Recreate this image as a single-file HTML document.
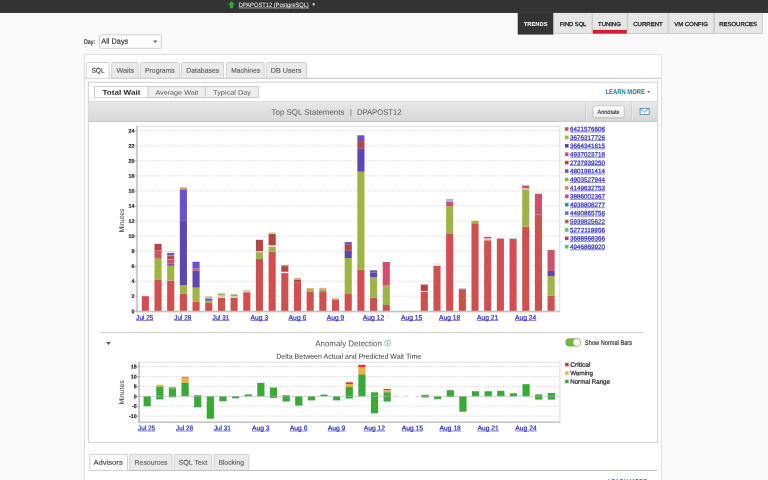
<!DOCTYPE html>
<html><head><meta charset="utf-8"><title>DPA Trends</title>
<style>
*{margin:0;padding:0}
html,body{width:768px;height:480px;overflow:hidden;background:#f9f9f9}
svg{position:absolute;left:0;top:0;display:block;will-change:transform}
svg text{font-family:"Liberation Sans",sans-serif;text-rendering:geometricPrecision}
</style></head><body>
<svg width="768" height="480" viewBox="0 0 768 480">
<rect x="0.00" y="0.00" width="768.00" height="12.90" fill="#333" rx="0" />
<line x1="0.00" y1="13.20" x2="768.00" y2="13.20" stroke="#fdfdfd" stroke-width="0.6" />
<rect x="517.70" y="12.90" width="35.90" height="21.70" fill="#333" rx="0" />
<text x="535.65" y="26.08" font-size="5.8" fill="#fff" text-anchor="middle" font-weight="bold" transform="rotate(0.03 535.7 26.1)" >TRENDS</text>
<rect x="553.75" y="12.40" width="38.15" height="21.10" fill="#e6e6e6" stroke="#c6c6c6" stroke-width="0.8" rx="0" />
<text x="559.80" y="26.08" font-size="5.8" fill="#1c1c1c" textLength="26.50" lengthAdjust="spacingAndGlyphs" stroke="#1c1c1c" stroke-width="0.28" transform="rotate(0.03 559.8 26.1)" >FIND SQL</text>
<rect x="592.50" y="12.40" width="34.70" height="21.10" fill="#e6e6e6" stroke="#c6c6c6" stroke-width="0.8" rx="0" />
<text x="598.00" y="26.08" font-size="5.8" fill="#1c1c1c" textLength="22.80" lengthAdjust="spacingAndGlyphs" stroke="#1c1c1c" stroke-width="0.28" transform="rotate(0.03 598.0 26.1)" >TUNING</text>
<rect x="627.80" y="12.40" width="40.20" height="21.10" fill="#e6e6e6" stroke="#c6c6c6" stroke-width="0.8" rx="0" />
<text x="633.20" y="26.08" font-size="5.8" fill="#1c1c1c" textLength="29.60" lengthAdjust="spacingAndGlyphs" stroke="#1c1c1c" stroke-width="0.28" transform="rotate(0.03 633.2 26.1)" >CURRENT</text>
<rect x="668.80" y="12.40" width="44.60" height="21.10" fill="#e6e6e6" stroke="#c6c6c6" stroke-width="0.8" rx="0" />
<text x="674.20" y="26.08" font-size="5.8" fill="#1c1c1c" textLength="33.80" lengthAdjust="spacingAndGlyphs" stroke="#1c1c1c" stroke-width="0.28" transform="rotate(0.03 674.2 26.1)" >VM CONFIG</text>
<rect x="714.50" y="12.40" width="48.10" height="21.10" fill="#e6e6e6" stroke="#c6c6c6" stroke-width="0.8" rx="0" />
<text x="719.20" y="26.08" font-size="5.8" fill="#1c1c1c" textLength="37.80" lengthAdjust="spacingAndGlyphs" stroke="#1c1c1c" stroke-width="0.28" transform="rotate(0.03 719.2 26.1)" >RESOURCES</text>
<rect x="592.90" y="29.90" width="33.90" height="3.70" fill="#d0202c" rx="0" />
<rect x="0.00" y="0.00" width="768.00" height="12.90" fill="#333" rx="0" />
<path d="M231.5 0.9 L235 4.7 L233.1 4.7 L233.1 8.3 L229.9 8.3 L229.9 4.7 L228 4.7 Z" fill="#1fb41f"/>
<text x="238.75" y="6.86" font-size="6.3" fill="#fff" textLength="70.00" lengthAdjust="spacingAndGlyphs" transform="rotate(0.03 238.8 6.9)" >DPAPOST12 (PostgreSQL)</text>
<line x1="238.75" y1="7.96" x2="308.75" y2="7.96" stroke="#fff" stroke-width="0.55"/>
<path d="M312.2 3.5 L315.2 3.5 L313.7 5.9 Z" fill="#fff"/>
<text x="84.00" y="43.50" font-size="6.7" fill="#222" textLength="11.00" lengthAdjust="spacingAndGlyphs" stroke="#222" stroke-width="0.12" transform="rotate(0.03 84.0 43.5)" >Day:</text>
<rect x="99.50" y="34.80" width="61.80" height="13.50" fill="#fff" stroke="#c8c8c8" stroke-width="0.9" rx="1.2" />
<text x="101.30" y="43.86" font-size="7.7" fill="#1c1c1c" textLength="27.00" lengthAdjust="spacingAndGlyphs" stroke="#1c1c1c" stroke-width="0.1" transform="rotate(0.03 101.3 43.9)" >All Days</text>
<path d="M153.1 40.6 L157.3 40.6 L155.2 43.1 Z" fill="#666"/>
<rect x="84.60" y="54.50" width="577.00" height="445.50" fill="#fff" stroke="#d8d8d8" stroke-width="0.8" rx="0" />
<line x1="85.00" y1="78.25" x2="661.20" y2="78.25" stroke="#bebebe" stroke-width="1.0" />
<rect x="86.25" y="62.50" width="22.95" height="17.50" fill="#fff" stroke="#cdcdcd" stroke-width="0.9" rx="1.2" />
<rect x="85.75" y="77.70" width="23.95" height="3.30" fill="#fff" rx="0" />
<line x1="85.75" y1="78.25" x2="109.70" y2="78.25" stroke="#d2d2d2" stroke-width="1.0" />
<text x="91.50" y="72.81" font-size="7" fill="#333" textLength="13.10" lengthAdjust="spacingAndGlyphs" stroke="#333" stroke-width="0.1" transform="rotate(0.03 91.5 72.8)" >SQL</text>
<rect x="111.70" y="62.50" width="26.60" height="17.50" fill="#eaeaea" stroke="#cdcdcd" stroke-width="0.9" rx="1.2" />
<rect x="111.20" y="77.70" width="27.60" height="3.30" fill="#fff" rx="0" />
<line x1="111.20" y1="78.25" x2="138.80" y2="78.25" stroke="#bebebe" stroke-width="1.0" />
<text x="116.50" y="72.81" font-size="7" fill="#555" textLength="17.70" lengthAdjust="spacingAndGlyphs" stroke="#555" stroke-width="0.1" transform="rotate(0.03 116.5 72.8)" >Waits</text>
<rect x="140.40" y="62.50" width="39.20" height="17.50" fill="#eaeaea" stroke="#cdcdcd" stroke-width="0.9" rx="1.2" />
<rect x="139.90" y="77.70" width="40.20" height="3.30" fill="#fff" rx="0" />
<line x1="139.90" y1="78.25" x2="180.10" y2="78.25" stroke="#bebebe" stroke-width="1.0" />
<text x="145.00" y="72.81" font-size="7" fill="#555" textLength="29.80" lengthAdjust="spacingAndGlyphs" stroke="#555" stroke-width="0.1" transform="rotate(0.03 145.0 72.8)" >Programs</text>
<rect x="181.50" y="62.50" width="42.10" height="17.50" fill="#eaeaea" stroke="#cdcdcd" stroke-width="0.9" rx="1.2" />
<rect x="181.00" y="77.70" width="43.10" height="3.30" fill="#fff" rx="0" />
<line x1="181.00" y1="78.25" x2="224.10" y2="78.25" stroke="#bebebe" stroke-width="1.0" />
<text x="186.25" y="72.81" font-size="7" fill="#555" textLength="32.95" lengthAdjust="spacingAndGlyphs" stroke="#555" stroke-width="0.1" transform="rotate(0.03 186.2 72.8)" >Databases</text>
<rect x="226.50" y="62.50" width="37.70" height="17.50" fill="#eaeaea" stroke="#cdcdcd" stroke-width="0.9" rx="1.2" />
<rect x="226.00" y="77.70" width="38.70" height="3.30" fill="#fff" rx="0" />
<line x1="226.00" y1="78.25" x2="264.70" y2="78.25" stroke="#bebebe" stroke-width="1.0" />
<text x="231.25" y="72.81" font-size="7" fill="#555" textLength="28.75" lengthAdjust="spacingAndGlyphs" stroke="#555" stroke-width="0.1" transform="rotate(0.03 231.2 72.8)" >Machines</text>
<rect x="266.25" y="62.50" width="40.45" height="17.50" fill="#eaeaea" stroke="#cdcdcd" stroke-width="0.9" rx="1.2" />
<rect x="265.75" y="77.70" width="41.45" height="3.30" fill="#fff" rx="0" />
<line x1="265.75" y1="78.25" x2="307.20" y2="78.25" stroke="#bebebe" stroke-width="1.0" />
<text x="270.80" y="72.81" font-size="7" fill="#555" textLength="30.70" lengthAdjust="spacingAndGlyphs" stroke="#555" stroke-width="0.1" transform="rotate(0.03 270.8 72.8)" >DB Users</text>
<rect x="88.30" y="82.20" width="569.40" height="360.20" fill="#fff" stroke="#cacaca" stroke-width="0.9" rx="0" />
<rect x="94.60" y="86.50" width="163.70" height="11.10" fill="#efefef" stroke="#c0c0c0" stroke-width="0.8" rx="0" />
<rect x="95.00" y="86.90" width="52.70" height="10.30" fill="#fff" rx="0" />
<line x1="148.00" y1="86.50" x2="148.00" y2="97.60" stroke="#c0c0c0" stroke-width="0.8" />
<line x1="205.40" y1="86.50" x2="205.40" y2="97.60" stroke="#c0c0c0" stroke-width="0.8" />
<text x="102.50" y="94.83" font-size="6.8" fill="#222" textLength="37.90" lengthAdjust="spacingAndGlyphs" font-weight="bold" transform="rotate(0.03 102.5 94.8)" >Total Wait</text>
<text x="155.40" y="94.76" font-size="6.6" fill="#555" textLength="42.90" lengthAdjust="spacingAndGlyphs" transform="rotate(0.03 155.4 94.8)" >Average Wait</text>
<text x="213.10" y="94.76" font-size="6.6" fill="#555" textLength="37.90" lengthAdjust="spacingAndGlyphs" transform="rotate(0.03 213.1 94.8)" >Typical Day</text>
<text x="605.40" y="94.21" font-size="7.0" fill="#1a7a9c" textLength="39.60" lengthAdjust="spacingAndGlyphs" font-weight="bold" transform="rotate(0.03 605.4 94.2)" >LEARN MORE</text>
<path d="M647.3 90.9 L650.1 90.9 L648.7 93 Z" fill="#1a7a9c"/>
<defs><linearGradient id="tb" x1="0" y1="0" x2="0" y2="1"><stop offset="0" stop-color="#e8e8e8"/><stop offset="1" stop-color="#d8d8d8"/></linearGradient></defs>
<rect x="88.80" y="101.30" width="568.40" height="20.20" fill="url(#tb)" rx="0" />
<line x1="88.80" y1="121.40" x2="657.20" y2="121.40" stroke="#c2c2c2" stroke-width="0.9" />
<line x1="88.80" y1="101.40" x2="657.20" y2="101.40" stroke="#d4d4d4" stroke-width="0.7" />
<line x1="585.80" y1="101.60" x2="585.80" y2="121.00" stroke="#c4c4c4" stroke-width="0.8" />
<line x1="631.70" y1="101.60" x2="631.70" y2="121.00" stroke="#c4c4c4" stroke-width="0.8" />
<line x1="586.50" y1="101.60" x2="586.50" y2="121.00" stroke="#f2f2f2" stroke-width="0.6" />
<line x1="632.40" y1="101.60" x2="632.40" y2="121.00" stroke="#f2f2f2" stroke-width="0.6" />
<text x="271.50" y="114.79" font-size="7.8" fill="#555" textLength="72.90" lengthAdjust="spacingAndGlyphs" transform="rotate(0.03 271.5 114.8)" >Top SQL Statements</text>
<text x="349.90" y="114.45" font-size="7.4" fill="#666" transform="rotate(0.03 349.9 114.4)" >|</text>
<text x="356.90" y="114.79" font-size="7.8" fill="#555" textLength="44.60" lengthAdjust="spacingAndGlyphs" transform="rotate(0.03 356.9 114.8)" >DPAPOST12</text>
<linearGradient id="bg" x1="0" y1="0" x2="0" y2="1"><stop offset="0" stop-color="#fdfdfd"/><stop offset="1" stop-color="#ececec"/></linearGradient>
<rect x="593.30" y="106.60" width="30.50" height="12.00" fill="#bdbdbd" rx="1.8" opacity="0.55"/>
<rect x="592.90" y="105.80" width="31.30" height="11.90" fill="url(#bg)" stroke="#b9b9b9" stroke-width="0.7" rx="1.6" />
<text x="597.50" y="113.92" font-size="6.2" fill="#333" textLength="22.10" lengthAdjust="spacingAndGlyphs" stroke="#333" stroke-width="0.12" transform="rotate(0.03 597.5 113.9)" >Annotate</text>
<rect x="640.10" y="108.40" width="9.10" height="6.00" fill="#f2f8fa" stroke="#3a8eaa" stroke-width="0.8" rx="0" />
<path d="M640.3 108.7 L644.65 112 L649 108.7" fill="none" stroke="#3a8eaa" stroke-width="0.7"/>
<rect x="136.30" y="126.20" width="423.50" height="185.60" fill="#fff" stroke="#dadada" stroke-width="0.9" rx="0" />
<line x1="137.60" y1="296.21" x2="559.30" y2="296.21" stroke="#cecece" stroke-width="0.8" stroke-dasharray="1.5 1.5"/>
<line x1="137.60" y1="281.17" x2="559.30" y2="281.17" stroke="#cecece" stroke-width="0.8" stroke-dasharray="1.5 1.5"/>
<line x1="137.60" y1="266.13" x2="559.30" y2="266.13" stroke="#cecece" stroke-width="0.8" stroke-dasharray="1.5 1.5"/>
<line x1="137.60" y1="251.09" x2="559.30" y2="251.09" stroke="#cecece" stroke-width="0.8" stroke-dasharray="1.5 1.5"/>
<line x1="137.60" y1="236.05" x2="559.30" y2="236.05" stroke="#cecece" stroke-width="0.8" stroke-dasharray="1.5 1.5"/>
<line x1="137.60" y1="221.01" x2="559.30" y2="221.01" stroke="#cecece" stroke-width="0.8" stroke-dasharray="1.5 1.5"/>
<line x1="137.60" y1="205.97" x2="559.30" y2="205.97" stroke="#cecece" stroke-width="0.8" stroke-dasharray="1.5 1.5"/>
<line x1="137.60" y1="190.93" x2="559.30" y2="190.93" stroke="#cecece" stroke-width="0.8" stroke-dasharray="1.5 1.5"/>
<line x1="137.60" y1="175.89" x2="559.30" y2="175.89" stroke="#cecece" stroke-width="0.8" stroke-dasharray="1.5 1.5"/>
<line x1="137.60" y1="160.85" x2="559.30" y2="160.85" stroke="#cecece" stroke-width="0.8" stroke-dasharray="1.5 1.5"/>
<line x1="137.60" y1="145.81" x2="559.30" y2="145.81" stroke="#cecece" stroke-width="0.8" stroke-dasharray="1.5 1.5"/>
<line x1="137.60" y1="130.77" x2="559.30" y2="130.77" stroke="#cecece" stroke-width="0.8" stroke-dasharray="1.5 1.5"/>
<rect x="141.80" y="296.21" width="7.10" height="15.04" fill="#d05050" rx="0" />
<rect x="154.48" y="279.89" width="7.10" height="31.36" fill="#d05050" rx="0" />
<rect x="154.48" y="258.01" width="7.10" height="21.88" fill="#9eb445" rx="0" />
<rect x="154.48" y="250.34" width="7.10" height="7.67" fill="#d0506c" rx="0" />
<rect x="154.48" y="243.80" width="7.10" height="6.54" fill="#b54545" rx="0" />
<rect x="167.16" y="280.57" width="7.10" height="30.68" fill="#d05050" rx="0" />
<rect x="167.16" y="265.75" width="7.10" height="14.81" fill="#9eb445" rx="0" />
<rect x="167.16" y="263.80" width="7.10" height="1.96" fill="#6a58b8" rx="0" />
<rect x="167.16" y="259.89" width="7.10" height="3.91" fill="#d0506c" rx="0" />
<rect x="167.16" y="258.99" width="7.10" height="0.90" fill="#d88088" rx="0" />
<rect x="167.16" y="256.05" width="7.10" height="2.93" fill="#b54545" rx="0" />
<rect x="167.16" y="255.53" width="7.10" height="0.53" fill="#e8c8c8" rx="0" />
<rect x="167.16" y="252.97" width="7.10" height="2.56" fill="#6852c8" rx="0" />
<rect x="167.16" y="251.84" width="7.10" height="1.13" fill="#fafafa" rx="0" />
<rect x="167.16" y="251.09" width="7.10" height="0.75" fill="#c8d8a0" rx="0" />
<rect x="179.84" y="293.50" width="7.10" height="17.75" fill="#d05050" rx="0" />
<rect x="179.84" y="285.16" width="7.10" height="8.35" fill="#9eb445" rx="0" />
<rect x="179.84" y="220.26" width="7.10" height="64.90" fill="#5c46b2" rx="0" />
<rect x="179.84" y="189.43" width="7.10" height="30.83" fill="#6852c8" rx="0" />
<rect x="179.84" y="187.55" width="7.10" height="1.88" fill="#d89050" rx="0" />
<rect x="192.52" y="301.85" width="7.10" height="9.40" fill="#d05050" rx="0" />
<rect x="192.52" y="287.64" width="7.10" height="14.21" fill="#9eb445" rx="0" />
<rect x="192.52" y="270.64" width="7.10" height="17.00" fill="#5c46b2" rx="0" />
<rect x="192.52" y="268.39" width="7.10" height="2.26" fill="#d0506c" rx="0" />
<rect x="192.52" y="261.99" width="7.10" height="6.39" fill="#6852c8" rx="0" />
<rect x="192.52" y="261.24" width="7.10" height="0.75" fill="#e8c8c8" rx="0" />
<rect x="205.20" y="302.98" width="7.10" height="8.27" fill="#d05050" rx="0" />
<rect x="205.20" y="300.72" width="7.10" height="2.26" fill="#9eb445" rx="0" />
<rect x="205.20" y="298.47" width="7.10" height="2.26" fill="#6852c8" rx="0" />
<rect x="205.20" y="297.49" width="7.10" height="0.98" fill="#a0b8e0" rx="0" />
<rect x="205.20" y="296.59" width="7.10" height="0.90" fill="#9eb445" rx="0" />
<rect x="217.88" y="297.71" width="7.10" height="13.54" fill="#d05050" rx="0" />
<rect x="217.88" y="295.46" width="7.10" height="2.26" fill="#e8c8c8" rx="0" />
<rect x="217.88" y="293.50" width="7.10" height="1.96" fill="#9eb445" rx="0" />
<rect x="230.56" y="297.86" width="7.10" height="13.39" fill="#d05050" rx="0" />
<rect x="230.56" y="296.21" width="7.10" height="1.65" fill="#e8c8c8" rx="0" />
<rect x="230.56" y="294.33" width="7.10" height="1.88" fill="#9eb445" rx="0" />
<rect x="243.24" y="292.22" width="7.10" height="19.03" fill="#d05050" rx="0" />
<rect x="243.24" y="290.95" width="7.10" height="1.28" fill="#e8c8c8" rx="0" />
<rect x="243.24" y="289.97" width="7.10" height="0.98" fill="#c8d8a0" rx="0" />
<rect x="255.92" y="258.84" width="7.10" height="52.41" fill="#d05050" rx="0" />
<rect x="255.92" y="252.14" width="7.10" height="6.69" fill="#9eb445" rx="0" />
<rect x="255.92" y="251.09" width="7.10" height="1.05" fill="#e8c8c8" rx="0" />
<rect x="255.92" y="239.81" width="7.10" height="11.28" fill="#b54545" rx="0" />
<rect x="268.60" y="251.69" width="7.10" height="59.56" fill="#d05050" rx="0" />
<rect x="268.60" y="246.50" width="7.10" height="5.19" fill="#9eb445" rx="0" />
<rect x="268.60" y="245.07" width="7.10" height="1.43" fill="#e8c8c8" rx="0" />
<rect x="268.60" y="233.79" width="7.10" height="11.28" fill="#b54545" rx="0" />
<rect x="268.60" y="232.29" width="7.10" height="1.50" fill="#c8d8a0" rx="0" />
<rect x="281.28" y="273.05" width="7.10" height="38.20" fill="#d05050" rx="0" />
<rect x="281.28" y="271.77" width="7.10" height="1.28" fill="#f4eeee" rx="0" />
<rect x="281.28" y="266.13" width="7.10" height="5.64" fill="#b54545" rx="0" />
<rect x="281.28" y="264.85" width="7.10" height="1.28" fill="#9eb445" rx="0" />
<rect x="293.96" y="282.45" width="7.10" height="28.80" fill="#d05050" rx="0" />
<rect x="293.96" y="279.67" width="7.10" height="2.78" fill="#b54545" rx="0" />
<rect x="293.96" y="278.24" width="7.10" height="1.43" fill="#9eb445" rx="0" />
<rect x="306.64" y="291.85" width="7.10" height="19.40" fill="#d05050" rx="0" />
<rect x="306.64" y="289.74" width="7.10" height="2.11" fill="#9eb445" rx="0" />
<rect x="306.64" y="288.24" width="7.10" height="1.50" fill="#d89050" rx="0" />
<rect x="319.32" y="291.17" width="7.10" height="20.08" fill="#d05050" rx="0" />
<rect x="319.32" y="289.74" width="7.10" height="1.43" fill="#9eb445" rx="0" />
<rect x="319.32" y="288.24" width="7.10" height="1.50" fill="#d89050" rx="0" />
<rect x="332.00" y="299.59" width="7.10" height="11.66" fill="#d05050" rx="0" />
<rect x="332.00" y="298.47" width="7.10" height="1.13" fill="#d89050" rx="0" />
<rect x="344.68" y="293.95" width="7.10" height="17.30" fill="#d05050" rx="0" />
<rect x="344.68" y="258.01" width="7.10" height="35.95" fill="#9eb445" rx="0" />
<rect x="344.68" y="250.71" width="7.10" height="7.29" fill="#5c46b2" rx="0" />
<rect x="344.68" y="244.17" width="7.10" height="6.54" fill="#b54545" rx="0" />
<rect x="344.68" y="242.07" width="7.10" height="2.11" fill="#6852c8" rx="0" />
<rect x="357.36" y="269.51" width="7.10" height="41.74" fill="#d05050" rx="0" />
<rect x="357.36" y="171.75" width="7.10" height="97.76" fill="#9eb445" rx="0" />
<rect x="357.36" y="148.29" width="7.10" height="23.46" fill="#5c46b2" rx="0" />
<rect x="357.36" y="141.07" width="7.10" height="7.22" fill="#b54545" rx="0" />
<rect x="357.36" y="135.28" width="7.10" height="5.79" fill="#6852c8" rx="0" />
<rect x="370.04" y="297.71" width="7.10" height="13.54" fill="#d05050" rx="0" />
<rect x="370.04" y="277.18" width="7.10" height="20.53" fill="#9eb445" rx="0" />
<rect x="370.04" y="272.37" width="7.10" height="4.81" fill="#5c46b2" rx="0" />
<rect x="370.04" y="270.27" width="7.10" height="2.11" fill="#6852c8" rx="0" />
<rect x="382.72" y="305.01" width="7.10" height="6.24" fill="#d05050" rx="0" />
<rect x="382.72" y="285.53" width="7.10" height="19.48" fill="#9eb445" rx="0" />
<rect x="382.72" y="261.99" width="7.10" height="23.54" fill="#d0506c" rx="0" />
<rect x="420.76" y="291.85" width="7.10" height="19.40" fill="#d05050" rx="0" />
<rect x="420.76" y="290.95" width="7.10" height="0.90" fill="#f4eeee" rx="0" />
<rect x="420.76" y="284.55" width="7.10" height="6.39" fill="#b54545" rx="0" />
<rect x="433.44" y="265.75" width="7.10" height="45.50" fill="#d05050" rx="0" />
<rect x="433.44" y="263.12" width="7.10" height="2.63" fill="#efe2e6" rx="0" />
<rect x="446.12" y="233.34" width="7.10" height="77.91" fill="#d05050" rx="0" />
<rect x="446.12" y="206.20" width="7.10" height="27.15" fill="#9eb445" rx="0" />
<rect x="446.12" y="201.61" width="7.10" height="4.59" fill="#d0506c" rx="0" />
<rect x="446.12" y="198.90" width="7.10" height="2.71" fill="#a0b8e0" rx="0" />
<rect x="458.80" y="289.14" width="7.10" height="22.11" fill="#d05050" rx="0" />
<rect x="458.80" y="288.31" width="7.10" height="0.83" fill="#a0b8e0" rx="0" />
<rect x="471.48" y="223.27" width="7.10" height="87.98" fill="#d05050" rx="0" />
<rect x="471.48" y="220.78" width="7.10" height="2.48" fill="#9eb445" rx="0" />
<rect x="484.16" y="240.26" width="7.10" height="70.99" fill="#d05050" rx="0" />
<rect x="484.16" y="238.16" width="7.10" height="2.11" fill="#c8d8a0" rx="0" />
<rect x="484.16" y="236.88" width="7.10" height="1.28" fill="#c040a0" rx="0" />
<rect x="496.84" y="238.53" width="7.10" height="72.72" fill="#d05050" rx="0" />
<rect x="509.52" y="238.98" width="7.10" height="72.27" fill="#d05050" rx="0" />
<rect x="509.52" y="238.31" width="7.10" height="0.68" fill="#a0b8e0" rx="0" />
<rect x="522.20" y="226.65" width="7.10" height="84.60" fill="#d05050" rx="0" />
<rect x="522.20" y="189.43" width="7.10" height="37.22" fill="#9eb445" rx="0" />
<rect x="522.20" y="188.30" width="7.10" height="1.13" fill="#e8c8c8" rx="0" />
<rect x="522.20" y="185.52" width="7.10" height="2.78" fill="#d0506c" rx="0" />
<rect x="534.88" y="214.54" width="7.10" height="96.71" fill="#d05050" rx="0" />
<rect x="534.88" y="193.71" width="7.10" height="20.83" fill="#d0506c" rx="0" />
<rect x="547.56" y="295.61" width="7.10" height="15.64" fill="#d05050" rx="0" />
<rect x="547.56" y="276.13" width="7.10" height="19.48" fill="#9eb445" rx="0" />
<rect x="547.56" y="270.94" width="7.10" height="5.19" fill="#5c46b2" rx="0" />
<rect x="547.56" y="250.04" width="7.10" height="20.91" fill="#d0506c" rx="0" />
<line x1="137.00" y1="126.20" x2="137.00" y2="312.20" stroke="#c2c2c2" stroke-width="1.5" />
<line x1="136.30" y1="311.50" x2="559.80" y2="311.50" stroke="#c2c2c2" stroke-width="1.6" />
<line x1="134.60" y1="311.25" x2="136.60" y2="311.25" stroke="#888" stroke-width="0.6" />
<text x="134.40" y="313.15" font-size="5.3" fill="#2c2c2c" text-anchor="end" font-weight="bold" stroke="#2c2c2c" stroke-width="0.2" transform="rotate(0.03 134.4 313.1)" >0</text>
<line x1="134.60" y1="296.21" x2="136.60" y2="296.21" stroke="#888" stroke-width="0.6" />
<text x="134.40" y="298.11" font-size="5.3" fill="#2c2c2c" text-anchor="end" font-weight="bold" stroke="#2c2c2c" stroke-width="0.2" transform="rotate(0.03 134.4 298.1)" >2</text>
<line x1="134.60" y1="281.17" x2="136.60" y2="281.17" stroke="#888" stroke-width="0.6" />
<text x="134.40" y="283.07" font-size="5.3" fill="#2c2c2c" text-anchor="end" font-weight="bold" stroke="#2c2c2c" stroke-width="0.2" transform="rotate(0.03 134.4 283.1)" >4</text>
<line x1="134.60" y1="266.13" x2="136.60" y2="266.13" stroke="#888" stroke-width="0.6" />
<text x="134.40" y="268.03" font-size="5.3" fill="#2c2c2c" text-anchor="end" font-weight="bold" stroke="#2c2c2c" stroke-width="0.2" transform="rotate(0.03 134.4 268.0)" >6</text>
<line x1="134.60" y1="251.09" x2="136.60" y2="251.09" stroke="#888" stroke-width="0.6" />
<text x="134.40" y="252.99" font-size="5.3" fill="#2c2c2c" text-anchor="end" font-weight="bold" stroke="#2c2c2c" stroke-width="0.2" transform="rotate(0.03 134.4 253.0)" >8</text>
<line x1="134.60" y1="236.05" x2="136.60" y2="236.05" stroke="#888" stroke-width="0.6" />
<text x="134.40" y="237.95" font-size="5.3" fill="#2c2c2c" text-anchor="end" font-weight="bold" stroke="#2c2c2c" stroke-width="0.2" transform="rotate(0.03 134.4 237.9)" >10</text>
<line x1="134.60" y1="221.01" x2="136.60" y2="221.01" stroke="#888" stroke-width="0.6" />
<text x="134.40" y="222.91" font-size="5.3" fill="#2c2c2c" text-anchor="end" font-weight="bold" stroke="#2c2c2c" stroke-width="0.2" transform="rotate(0.03 134.4 222.9)" >12</text>
<line x1="134.60" y1="205.97" x2="136.60" y2="205.97" stroke="#888" stroke-width="0.6" />
<text x="134.40" y="207.87" font-size="5.3" fill="#2c2c2c" text-anchor="end" font-weight="bold" stroke="#2c2c2c" stroke-width="0.2" transform="rotate(0.03 134.4 207.9)" >14</text>
<line x1="134.60" y1="190.93" x2="136.60" y2="190.93" stroke="#888" stroke-width="0.6" />
<text x="134.40" y="192.83" font-size="5.3" fill="#2c2c2c" text-anchor="end" font-weight="bold" stroke="#2c2c2c" stroke-width="0.2" transform="rotate(0.03 134.4 192.8)" >16</text>
<line x1="134.60" y1="175.89" x2="136.60" y2="175.89" stroke="#888" stroke-width="0.6" />
<text x="134.40" y="177.79" font-size="5.3" fill="#2c2c2c" text-anchor="end" font-weight="bold" stroke="#2c2c2c" stroke-width="0.2" transform="rotate(0.03 134.4 177.8)" >18</text>
<line x1="134.60" y1="160.85" x2="136.60" y2="160.85" stroke="#888" stroke-width="0.6" />
<text x="134.40" y="162.75" font-size="5.3" fill="#2c2c2c" text-anchor="end" font-weight="bold" stroke="#2c2c2c" stroke-width="0.2" transform="rotate(0.03 134.4 162.7)" >20</text>
<line x1="134.60" y1="145.81" x2="136.60" y2="145.81" stroke="#888" stroke-width="0.6" />
<text x="134.40" y="147.71" font-size="5.3" fill="#2c2c2c" text-anchor="end" font-weight="bold" stroke="#2c2c2c" stroke-width="0.2" transform="rotate(0.03 134.4 147.7)" >22</text>
<line x1="134.60" y1="130.77" x2="136.60" y2="130.77" stroke="#888" stroke-width="0.6" />
<text x="134.40" y="132.67" font-size="5.3" fill="#2c2c2c" text-anchor="end" font-weight="bold" stroke="#2c2c2c" stroke-width="0.2" transform="rotate(0.03 134.4 132.7)" >24</text>
<text transform="translate(124.2,220.5) rotate(-90)" text-anchor="middle" font-size="6.9" fill="#333">Minutes</text>
<text x="136.30" y="319.70" font-size="6.7" fill="#2626c8" textLength="17.00" lengthAdjust="spacingAndGlyphs" stroke="#2626c8" stroke-width="0.18" transform="rotate(0.03 136.3 319.7)" >Jul 25</text>
<line x1="136.30" y1="320.45" x2="153.30" y2="320.45" stroke="#2626c8" stroke-width="0.55"/>
<text x="174.34" y="319.70" font-size="6.7" fill="#2626c8" textLength="17.00" lengthAdjust="spacingAndGlyphs" stroke="#2626c8" stroke-width="0.18" transform="rotate(0.03 174.3 319.7)" >Jul 28</text>
<line x1="174.34" y1="320.45" x2="191.34" y2="320.45" stroke="#2626c8" stroke-width="0.55"/>
<text x="212.38" y="319.70" font-size="6.7" fill="#2626c8" textLength="17.00" lengthAdjust="spacingAndGlyphs" stroke="#2626c8" stroke-width="0.18" transform="rotate(0.03 212.4 319.7)" >Jul 31</text>
<line x1="212.38" y1="320.45" x2="229.38" y2="320.45" stroke="#2626c8" stroke-width="0.55"/>
<text x="250.57" y="319.70" font-size="6.7" fill="#2626c8" textLength="17.70" lengthAdjust="spacingAndGlyphs" stroke="#2626c8" stroke-width="0.18" transform="rotate(0.03 250.6 319.7)" >Aug 3</text>
<line x1="250.57" y1="320.45" x2="268.27" y2="320.45" stroke="#2626c8" stroke-width="0.55"/>
<text x="288.61" y="319.70" font-size="6.7" fill="#2626c8" textLength="17.70" lengthAdjust="spacingAndGlyphs" stroke="#2626c8" stroke-width="0.18" transform="rotate(0.03 288.6 319.7)" >Aug 6</text>
<line x1="288.61" y1="320.45" x2="306.31" y2="320.45" stroke="#2626c8" stroke-width="0.55"/>
<text x="326.65" y="319.70" font-size="6.7" fill="#2626c8" textLength="17.70" lengthAdjust="spacingAndGlyphs" stroke="#2626c8" stroke-width="0.18" transform="rotate(0.03 326.6 319.7)" >Aug 9</text>
<line x1="326.65" y1="320.45" x2="344.35" y2="320.45" stroke="#2626c8" stroke-width="0.55"/>
<text x="362.89" y="319.70" font-size="6.7" fill="#2626c8" textLength="21.30" lengthAdjust="spacingAndGlyphs" stroke="#2626c8" stroke-width="0.18" transform="rotate(0.03 362.9 319.7)" >Aug 12</text>
<line x1="362.89" y1="320.45" x2="384.19" y2="320.45" stroke="#2626c8" stroke-width="0.55"/>
<text x="400.93" y="319.70" font-size="6.7" fill="#2626c8" textLength="21.30" lengthAdjust="spacingAndGlyphs" stroke="#2626c8" stroke-width="0.18" transform="rotate(0.03 400.9 319.7)" >Aug 15</text>
<line x1="400.93" y1="320.45" x2="422.23" y2="320.45" stroke="#2626c8" stroke-width="0.55"/>
<text x="438.97" y="319.70" font-size="6.7" fill="#2626c8" textLength="21.30" lengthAdjust="spacingAndGlyphs" stroke="#2626c8" stroke-width="0.18" transform="rotate(0.03 439.0 319.7)" >Aug 18</text>
<line x1="438.97" y1="320.45" x2="460.27" y2="320.45" stroke="#2626c8" stroke-width="0.55"/>
<text x="477.01" y="319.70" font-size="6.7" fill="#2626c8" textLength="21.30" lengthAdjust="spacingAndGlyphs" stroke="#2626c8" stroke-width="0.18" transform="rotate(0.03 477.0 319.7)" >Aug 21</text>
<line x1="477.01" y1="320.45" x2="498.31" y2="320.45" stroke="#2626c8" stroke-width="0.55"/>
<text x="515.05" y="319.70" font-size="6.7" fill="#2626c8" textLength="21.30" lengthAdjust="spacingAndGlyphs" stroke="#2626c8" stroke-width="0.18" transform="rotate(0.03 515.1 319.7)" >Aug 24</text>
<line x1="515.05" y1="320.45" x2="536.35" y2="320.45" stroke="#2626c8" stroke-width="0.55"/>
<rect x="565.00" y="127.20" width="3.50" height="3.60" fill="#d05050" rx="0" />
<text x="570.00" y="131.26" font-size="6.3" fill="#2626c8" textLength="35.00" lengthAdjust="spacingAndGlyphs" stroke="#2626c8" stroke-width="0.2" transform="rotate(0.03 570.0 131.3)" >6421576606</text>
<line x1="570.00" y1="132.01" x2="605.00" y2="132.01" stroke="#2626c8" stroke-width="0.55"/>
<rect x="565.00" y="135.61" width="3.50" height="3.60" fill="#9eb445" rx="0" />
<text x="570.00" y="139.67" font-size="6.3" fill="#2626c8" textLength="35.00" lengthAdjust="spacingAndGlyphs" stroke="#2626c8" stroke-width="0.2" transform="rotate(0.03 570.0 139.7)" >3676317726</text>
<line x1="570.00" y1="140.42" x2="605.00" y2="140.42" stroke="#2626c8" stroke-width="0.55"/>
<rect x="565.00" y="144.02" width="3.50" height="3.60" fill="#5040b0" rx="0" />
<text x="570.00" y="148.08" font-size="6.3" fill="#2626c8" textLength="35.00" lengthAdjust="spacingAndGlyphs" stroke="#2626c8" stroke-width="0.2" transform="rotate(0.03 570.0 148.1)" >3664341615</text>
<line x1="570.00" y1="148.83" x2="605.00" y2="148.83" stroke="#2626c8" stroke-width="0.55"/>
<rect x="565.00" y="152.43" width="3.50" height="3.60" fill="#d0506c" rx="0" />
<text x="570.00" y="156.49" font-size="6.3" fill="#2626c8" textLength="35.00" lengthAdjust="spacingAndGlyphs" stroke="#2626c8" stroke-width="0.2" transform="rotate(0.03 570.0 156.5)" >4937023718</text>
<line x1="570.00" y1="157.24" x2="605.00" y2="157.24" stroke="#2626c8" stroke-width="0.55"/>
<rect x="565.00" y="160.84" width="3.50" height="3.60" fill="#b54040" rx="0" />
<text x="570.00" y="164.90" font-size="6.3" fill="#2626c8" textLength="35.00" lengthAdjust="spacingAndGlyphs" stroke="#2626c8" stroke-width="0.2" transform="rotate(0.03 570.0 164.9)" >2737939250</text>
<line x1="570.00" y1="165.65" x2="605.00" y2="165.65" stroke="#2626c8" stroke-width="0.55"/>
<rect x="565.00" y="169.25" width="3.50" height="3.60" fill="#6852d0" rx="0" />
<text x="570.00" y="173.31" font-size="6.3" fill="#2626c8" textLength="35.00" lengthAdjust="spacingAndGlyphs" stroke="#2626c8" stroke-width="0.2" transform="rotate(0.03 570.0 173.3)" >4801981414</text>
<line x1="570.00" y1="174.06" x2="605.00" y2="174.06" stroke="#2626c8" stroke-width="0.55"/>
<rect x="565.00" y="177.66" width="3.50" height="3.60" fill="#88b840" rx="0" />
<text x="570.00" y="181.72" font-size="6.3" fill="#2626c8" textLength="35.00" lengthAdjust="spacingAndGlyphs" stroke="#2626c8" stroke-width="0.2" transform="rotate(0.03 570.0 181.7)" >4903527944</text>
<line x1="570.00" y1="182.47" x2="605.00" y2="182.47" stroke="#2626c8" stroke-width="0.55"/>
<rect x="565.00" y="186.07" width="3.50" height="3.60" fill="#d88a48" rx="0" />
<text x="570.00" y="190.13" font-size="6.3" fill="#2626c8" textLength="35.00" lengthAdjust="spacingAndGlyphs" stroke="#2626c8" stroke-width="0.2" transform="rotate(0.03 570.0 190.1)" >4149632753</text>
<line x1="570.00" y1="190.88" x2="605.00" y2="190.88" stroke="#2626c8" stroke-width="0.55"/>
<rect x="565.00" y="194.48" width="3.50" height="3.60" fill="#d045a0" rx="0" />
<text x="570.00" y="198.54" font-size="6.3" fill="#2626c8" textLength="35.00" lengthAdjust="spacingAndGlyphs" stroke="#2626c8" stroke-width="0.2" transform="rotate(0.03 570.0 198.5)" >3886002367</text>
<line x1="570.00" y1="199.29" x2="605.00" y2="199.29" stroke="#2626c8" stroke-width="0.55"/>
<rect x="565.00" y="202.89" width="3.50" height="3.60" fill="#3888b0" rx="0" />
<text x="570.00" y="206.95" font-size="6.3" fill="#2626c8" textLength="35.00" lengthAdjust="spacingAndGlyphs" stroke="#2626c8" stroke-width="0.2" transform="rotate(0.03 570.0 206.9)" >4938808277</text>
<line x1="570.00" y1="207.70" x2="605.00" y2="207.70" stroke="#2626c8" stroke-width="0.55"/>
<rect x="565.00" y="211.30" width="3.50" height="3.60" fill="#4a80d0" rx="0" />
<text x="570.00" y="215.36" font-size="6.3" fill="#2626c8" textLength="35.00" lengthAdjust="spacingAndGlyphs" stroke="#2626c8" stroke-width="0.2" transform="rotate(0.03 570.0 215.4)" >4490865756</text>
<line x1="570.00" y1="216.11" x2="605.00" y2="216.11" stroke="#2626c8" stroke-width="0.55"/>
<rect x="565.00" y="219.71" width="3.50" height="3.60" fill="#d05045" rx="0" />
<text x="570.00" y="223.77" font-size="6.3" fill="#2626c8" textLength="35.00" lengthAdjust="spacingAndGlyphs" stroke="#2626c8" stroke-width="0.2" transform="rotate(0.03 570.0 223.8)" >5939825622</text>
<line x1="570.00" y1="224.52" x2="605.00" y2="224.52" stroke="#2626c8" stroke-width="0.55"/>
<rect x="565.00" y="228.12" width="3.50" height="3.60" fill="#48c878" rx="0" />
<text x="570.00" y="232.18" font-size="6.3" fill="#2626c8" textLength="35.00" lengthAdjust="spacingAndGlyphs" stroke="#2626c8" stroke-width="0.2" transform="rotate(0.03 570.0 232.2)" >5272119956</text>
<line x1="570.00" y1="232.93" x2="605.00" y2="232.93" stroke="#2626c8" stroke-width="0.55"/>
<rect x="565.00" y="236.53" width="3.50" height="3.60" fill="#b03a8a" rx="0" />
<text x="570.00" y="240.59" font-size="6.3" fill="#2626c8" textLength="35.00" lengthAdjust="spacingAndGlyphs" stroke="#2626c8" stroke-width="0.2" transform="rotate(0.03 570.0 240.6)" >3688968366</text>
<line x1="570.00" y1="241.34" x2="605.00" y2="241.34" stroke="#2626c8" stroke-width="0.55"/>
<rect x="565.00" y="244.94" width="3.50" height="3.60" fill="#48c878" rx="0" />
<text x="570.00" y="249.00" font-size="6.3" fill="#2626c8" textLength="35.00" lengthAdjust="spacingAndGlyphs" stroke="#2626c8" stroke-width="0.2" transform="rotate(0.03 570.0 249.0)" >4946869920</text>
<line x1="570.00" y1="249.75" x2="605.00" y2="249.75" stroke="#2626c8" stroke-width="0.55"/>
<line x1="100.40" y1="332.50" x2="643.00" y2="332.50" stroke="#cdcdcd" stroke-width="0.9" />
<path d="M106 342 L111 342 L108.5 345 Z" fill="#5c5c5c"/>
<text x="315.20" y="346.24" font-size="8.2" fill="#56565c" textLength="66.70" lengthAdjust="spacingAndGlyphs" transform="rotate(0.03 315.2 346.2)" >Anomaly Detection</text>
<circle cx="387.6" cy="343.1" r="2.9" fill="#fff" stroke="#6aa6c6" stroke-width="0.7"/>
<text x="387.60" y="344.82" font-size="4.8" fill="#3d7898" text-anchor="middle" font-weight="bold" transform="rotate(0.03 387.6 344.8)" >i</text>
<text x="276.25" y="358.78" font-size="7.2" fill="#3a3a3a" textLength="145.00" lengthAdjust="spacingAndGlyphs" transform="rotate(0.03 276.2 358.8)" >Delta Between Actual and Predicted Wait Time</text>
<rect x="565.40" y="338.30" width="15.40" height="8.20" fill="#78b444" rx="4.1" />
<circle cx="576.7" cy="342.4" r="3.4" fill="#fff"/>
<text x="585.00" y="344.93" font-size="6.8" fill="#2e2e2e" textLength="47.00" lengthAdjust="spacingAndGlyphs" stroke="#2e2e2e" stroke-width="0.15" transform="rotate(0.03 585.0 344.9)" >Show Normal Bars</text>
<rect x="138.60" y="362.20" width="421.30" height="60.30" fill="#fff" stroke="#dadada" stroke-width="0.9" rx="0" />
<line x1="139.80" y1="416.10" x2="559.30" y2="416.10" stroke="#cecece" stroke-width="0.8" stroke-dasharray="1.5 1.5"/>
<line x1="139.80" y1="406.20" x2="559.30" y2="406.20" stroke="#cecece" stroke-width="0.8" stroke-dasharray="1.5 1.5"/>
<line x1="139.80" y1="386.40" x2="559.30" y2="386.40" stroke="#cecece" stroke-width="0.8" stroke-dasharray="1.5 1.5"/>
<line x1="139.80" y1="376.50" x2="559.30" y2="376.50" stroke="#cecece" stroke-width="0.8" stroke-dasharray="1.5 1.5"/>
<line x1="139.80" y1="366.60" x2="559.30" y2="366.60" stroke="#cecece" stroke-width="0.8" stroke-dasharray="1.5 1.5"/>
<rect x="143.60" y="396.30" width="7.20" height="9.95" fill="#38aa38" rx="0" />
<rect x="156.23" y="384.80" width="7.20" height="2.10" fill="#f0b040" rx="0" />
<rect x="156.23" y="386.90" width="7.20" height="12.50" fill="#38aa38" rx="0" />
<rect x="168.86" y="386.90" width="7.20" height="1.40" fill="#f09080" rx="0" />
<rect x="168.86" y="388.30" width="7.20" height="9.00" fill="#38aa38" rx="0" />
<rect x="181.49" y="376.90" width="7.20" height="0.80" fill="#e03030" rx="0" />
<rect x="181.49" y="377.70" width="7.20" height="5.00" fill="#f0b040" rx="0" />
<rect x="181.49" y="382.70" width="7.20" height="13.60" fill="#38aa38" rx="0" />
<rect x="194.12" y="395.20" width="7.20" height="12.10" fill="#38aa38" rx="0" />
<rect x="206.75" y="396.30" width="7.20" height="22.45" fill="#38aa38" rx="0" />
<rect x="219.38" y="396.30" width="7.20" height="4.95" fill="#38aa38" rx="0" />
<rect x="232.01" y="396.30" width="7.20" height="2.00" fill="#38aa38" rx="0" />
<rect x="244.64" y="394.40" width="7.20" height="1.90" fill="#38aa38" rx="0" />
<rect x="257.27" y="382.90" width="7.20" height="13.40" fill="#38aa38" rx="0" />
<rect x="269.90" y="387.50" width="7.20" height="10.40" fill="#38aa38" rx="0" />
<rect x="282.53" y="395.20" width="7.20" height="6.30" fill="#38aa38" rx="0" />
<rect x="295.16" y="396.30" width="7.20" height="9.30" fill="#38aa38" rx="0" />
<rect x="307.79" y="396.30" width="7.20" height="4.10" fill="#38aa38" rx="0" />
<rect x="320.42" y="394.60" width="7.20" height="1.70" fill="#38aa38" rx="0" />
<rect x="333.05" y="396.30" width="7.20" height="4.10" fill="#38aa38" rx="0" />
<rect x="345.68" y="382.30" width="7.20" height="1.70" fill="#e03030" rx="0" />
<rect x="345.68" y="384.00" width="7.20" height="2.90" fill="#f0b040" rx="0" />
<rect x="345.68" y="386.90" width="7.20" height="11.60" fill="#38aa38" rx="0" />
<rect x="358.31" y="364.80" width="7.20" height="2.20" fill="#e03030" rx="0" />
<rect x="358.31" y="367.00" width="7.20" height="7.40" fill="#f0b040" rx="0" />
<rect x="358.31" y="374.40" width="7.20" height="21.90" fill="#38aa38" rx="0" />
<rect x="370.94" y="392.30" width="7.20" height="21.00" fill="#38aa38" rx="0" />
<rect x="383.57" y="389.00" width="7.20" height="1.20" fill="#e03030" rx="0" />
<rect x="383.57" y="390.20" width="7.20" height="2.10" fill="#f0b040" rx="0" />
<rect x="383.57" y="392.30" width="7.20" height="9.20" fill="#38aa38" rx="0" />
<rect x="421.46" y="394.80" width="7.20" height="2.70" fill="#38aa38" rx="0" />
<rect x="434.09" y="396.30" width="7.20" height="2.90" fill="#38aa38" rx="0" />
<rect x="446.72" y="390.20" width="7.20" height="6.80" fill="#38aa38" rx="0" />
<rect x="459.35" y="396.30" width="7.20" height="15.40" fill="#38aa38" rx="0" />
<rect x="471.98" y="391.25" width="7.20" height="5.05" fill="#38aa38" rx="0" />
<rect x="484.61" y="391.25" width="7.20" height="5.05" fill="#38aa38" rx="0" />
<rect x="497.24" y="390.80" width="7.20" height="5.50" fill="#38aa38" rx="0" />
<rect x="509.87" y="393.30" width="7.20" height="3.00" fill="#38aa38" rx="0" />
<rect x="522.50" y="384.20" width="7.20" height="12.10" fill="#38aa38" rx="0" />
<rect x="535.13" y="394.40" width="7.20" height="5.20" fill="#38aa38" rx="0" />
<rect x="547.76" y="393.00" width="7.20" height="6.60" fill="#38aa38" rx="0" />
<line x1="139.00" y1="396.30" x2="392.00" y2="396.30" stroke="#b4b4b4" stroke-width="0.8" opacity="0.8"/>
<line x1="420.00" y1="396.30" x2="559.60" y2="396.30" stroke="#b4b4b4" stroke-width="0.8" opacity="0.8"/>
<line x1="393.30" y1="396.30" x2="397.50" y2="396.30" stroke="#c4c4c4" stroke-width="0.8" />
<line x1="403.75" y1="396.30" x2="408.30" y2="396.30" stroke="#c4c4c4" stroke-width="0.8" />
<line x1="415.20" y1="396.30" x2="420.00" y2="396.30" stroke="#c4c4c4" stroke-width="0.8" />
<line x1="139.20" y1="362.20" x2="139.20" y2="422.90" stroke="#c2c2c2" stroke-width="1.5" />
<line x1="138.60" y1="422.20" x2="559.90" y2="422.20" stroke="#c2c2c2" stroke-width="1.6" />
<line x1="137.00" y1="416.10" x2="139.00" y2="416.10" stroke="#888" stroke-width="0.6" />
<text x="136.70" y="418.00" font-size="5.3" fill="#2c2c2c" text-anchor="end" font-weight="bold" stroke="#2c2c2c" stroke-width="0.2" transform="rotate(0.03 136.7 418.0)" >-10</text>
<line x1="137.00" y1="406.20" x2="139.00" y2="406.20" stroke="#888" stroke-width="0.6" />
<text x="136.70" y="408.10" font-size="5.3" fill="#2c2c2c" text-anchor="end" font-weight="bold" stroke="#2c2c2c" stroke-width="0.2" transform="rotate(0.03 136.7 408.1)" >-5</text>
<line x1="137.00" y1="396.30" x2="139.00" y2="396.30" stroke="#888" stroke-width="0.6" />
<text x="136.70" y="398.20" font-size="5.3" fill="#2c2c2c" text-anchor="end" font-weight="bold" stroke="#2c2c2c" stroke-width="0.2" transform="rotate(0.03 136.7 398.2)" >0</text>
<line x1="137.00" y1="386.40" x2="139.00" y2="386.40" stroke="#888" stroke-width="0.6" />
<text x="136.70" y="388.30" font-size="5.3" fill="#2c2c2c" text-anchor="end" font-weight="bold" stroke="#2c2c2c" stroke-width="0.2" transform="rotate(0.03 136.7 388.3)" >5</text>
<line x1="137.00" y1="376.50" x2="139.00" y2="376.50" stroke="#888" stroke-width="0.6" />
<text x="136.70" y="378.40" font-size="5.3" fill="#2c2c2c" text-anchor="end" font-weight="bold" stroke="#2c2c2c" stroke-width="0.2" transform="rotate(0.03 136.7 378.4)" >10</text>
<line x1="137.00" y1="366.60" x2="139.00" y2="366.60" stroke="#888" stroke-width="0.6" />
<text x="136.70" y="368.50" font-size="5.3" fill="#2c2c2c" text-anchor="end" font-weight="bold" stroke="#2c2c2c" stroke-width="0.2" transform="rotate(0.03 136.7 368.5)" >15</text>
<text transform="translate(124.2,392.4) rotate(-90)" text-anchor="middle" font-size="6.9" fill="#333">Minutes</text>
<text x="138.10" y="430.30" font-size="6.7" fill="#2626c8" textLength="17.00" lengthAdjust="spacingAndGlyphs" stroke="#2626c8" stroke-width="0.18" transform="rotate(0.03 138.1 430.3)" >Jul 25</text>
<line x1="138.10" y1="431.05" x2="155.10" y2="431.05" stroke="#2626c8" stroke-width="0.55"/>
<text x="175.99" y="430.30" font-size="6.7" fill="#2626c8" textLength="17.00" lengthAdjust="spacingAndGlyphs" stroke="#2626c8" stroke-width="0.18" transform="rotate(0.03 176.0 430.3)" >Jul 28</text>
<line x1="175.99" y1="431.05" x2="192.99" y2="431.05" stroke="#2626c8" stroke-width="0.55"/>
<text x="213.88" y="430.30" font-size="6.7" fill="#2626c8" textLength="17.00" lengthAdjust="spacingAndGlyphs" stroke="#2626c8" stroke-width="0.18" transform="rotate(0.03 213.9 430.3)" >Jul 31</text>
<line x1="213.88" y1="431.05" x2="230.88" y2="431.05" stroke="#2626c8" stroke-width="0.55"/>
<text x="251.92" y="430.30" font-size="6.7" fill="#2626c8" textLength="17.70" lengthAdjust="spacingAndGlyphs" stroke="#2626c8" stroke-width="0.18" transform="rotate(0.03 251.9 430.3)" >Aug 3</text>
<line x1="251.92" y1="431.05" x2="269.62" y2="431.05" stroke="#2626c8" stroke-width="0.55"/>
<text x="289.81" y="430.30" font-size="6.7" fill="#2626c8" textLength="17.70" lengthAdjust="spacingAndGlyphs" stroke="#2626c8" stroke-width="0.18" transform="rotate(0.03 289.8 430.3)" >Aug 6</text>
<line x1="289.81" y1="431.05" x2="307.51" y2="431.05" stroke="#2626c8" stroke-width="0.55"/>
<text x="327.70" y="430.30" font-size="6.7" fill="#2626c8" textLength="17.70" lengthAdjust="spacingAndGlyphs" stroke="#2626c8" stroke-width="0.18" transform="rotate(0.03 327.7 430.3)" >Aug 9</text>
<line x1="327.70" y1="431.05" x2="345.40" y2="431.05" stroke="#2626c8" stroke-width="0.55"/>
<text x="363.79" y="430.30" font-size="6.7" fill="#2626c8" textLength="21.30" lengthAdjust="spacingAndGlyphs" stroke="#2626c8" stroke-width="0.18" transform="rotate(0.03 363.8 430.3)" >Aug 12</text>
<line x1="363.79" y1="431.05" x2="385.09" y2="431.05" stroke="#2626c8" stroke-width="0.55"/>
<text x="401.68" y="430.30" font-size="6.7" fill="#2626c8" textLength="21.30" lengthAdjust="spacingAndGlyphs" stroke="#2626c8" stroke-width="0.18" transform="rotate(0.03 401.7 430.3)" >Aug 15</text>
<line x1="401.68" y1="431.05" x2="422.98" y2="431.05" stroke="#2626c8" stroke-width="0.55"/>
<text x="439.57" y="430.30" font-size="6.7" fill="#2626c8" textLength="21.30" lengthAdjust="spacingAndGlyphs" stroke="#2626c8" stroke-width="0.18" transform="rotate(0.03 439.6 430.3)" >Aug 18</text>
<line x1="439.57" y1="431.05" x2="460.87" y2="431.05" stroke="#2626c8" stroke-width="0.55"/>
<text x="477.46" y="430.30" font-size="6.7" fill="#2626c8" textLength="21.30" lengthAdjust="spacingAndGlyphs" stroke="#2626c8" stroke-width="0.18" transform="rotate(0.03 477.5 430.3)" >Aug 21</text>
<line x1="477.46" y1="431.05" x2="498.76" y2="431.05" stroke="#2626c8" stroke-width="0.55"/>
<text x="515.35" y="430.30" font-size="6.7" fill="#2626c8" textLength="21.30" lengthAdjust="spacingAndGlyphs" stroke="#2626c8" stroke-width="0.18" transform="rotate(0.03 515.4 430.3)" >Aug 24</text>
<line x1="515.35" y1="431.05" x2="536.65" y2="431.05" stroke="#2626c8" stroke-width="0.55"/>
<rect x="565.20" y="362.85" width="3.40" height="3.50" fill="#e02838" rx="0" />
<text x="570.20" y="366.86" font-size="6.3" fill="#222" textLength="20.30" lengthAdjust="spacingAndGlyphs" stroke="#222" stroke-width="0.22" transform="rotate(0.03 570.2 366.9)" >Critical</text>
<rect x="565.20" y="371.30" width="3.40" height="3.50" fill="#f0b040" rx="0" />
<text x="570.20" y="375.31" font-size="6.3" fill="#222" textLength="22.80" lengthAdjust="spacingAndGlyphs" stroke="#222" stroke-width="0.22" transform="rotate(0.03 570.2 375.3)" >Warning</text>
<rect x="565.20" y="379.75" width="3.40" height="3.50" fill="#38aa38" rx="0" />
<text x="570.20" y="383.76" font-size="6.3" fill="#222" textLength="39.80" lengthAdjust="spacingAndGlyphs" stroke="#222" stroke-width="0.22" transform="rotate(0.03 570.2 383.8)" >Normal Range</text>
<line x1="88.30" y1="470.45" x2="657.70" y2="470.45" stroke="#bebebe" stroke-width="1.0" />
<rect x="89.80" y="454.40" width="37.70" height="18.60" fill="#fff" stroke="#cdcdcd" stroke-width="0.9" rx="1.2" />
<rect x="89.30" y="469.90" width="38.70" height="4.10" fill="#fff" rx="0" />
<line x1="89.30" y1="470.45" x2="128.00" y2="470.45" stroke="#d2d2d2" stroke-width="1.0" />
<text x="93.50" y="464.81" font-size="7" fill="#333" textLength="29.20" lengthAdjust="spacingAndGlyphs" stroke="#333" stroke-width="0.1" transform="rotate(0.03 93.5 464.8)" >Advisors</text>
<rect x="129.60" y="454.40" width="42.40" height="18.60" fill="#eaeaea" stroke="#cdcdcd" stroke-width="0.9" rx="1.2" />
<rect x="129.10" y="469.90" width="43.40" height="4.10" fill="#fff" rx="0" />
<line x1="129.10" y1="470.45" x2="172.50" y2="470.45" stroke="#bebebe" stroke-width="1.0" />
<text x="134.60" y="464.81" font-size="7" fill="#555" textLength="32.90" lengthAdjust="spacingAndGlyphs" stroke="#555" stroke-width="0.1" transform="rotate(0.03 134.6 464.8)" >Resources</text>
<rect x="174.20" y="454.40" width="37.50" height="18.60" fill="#eaeaea" stroke="#cdcdcd" stroke-width="0.9" rx="1.2" />
<rect x="173.70" y="469.90" width="38.50" height="4.10" fill="#fff" rx="0" />
<line x1="173.70" y1="470.45" x2="212.20" y2="470.45" stroke="#bebebe" stroke-width="1.0" />
<text x="178.50" y="464.81" font-size="7" fill="#555" textLength="28.60" lengthAdjust="spacingAndGlyphs" stroke="#555" stroke-width="0.1" transform="rotate(0.03 178.5 464.8)" >SQL Text</text>
<rect x="214.00" y="454.40" width="34.75" height="18.60" fill="#eaeaea" stroke="#cdcdcd" stroke-width="0.9" rx="1.2" />
<rect x="213.50" y="469.90" width="35.75" height="4.10" fill="#fff" rx="0" />
<line x1="213.50" y1="470.45" x2="249.25" y2="470.45" stroke="#bebebe" stroke-width="1.0" />
<text x="218.50" y="464.81" font-size="7" fill="#555" textLength="25.50" lengthAdjust="spacingAndGlyphs" stroke="#555" stroke-width="0.1" transform="rotate(0.03 218.5 464.8)" >Blocking</text>
<text x="607.70" y="484.01" font-size="7.0" fill="#1a7a9c" textLength="39.60" lengthAdjust="spacingAndGlyphs" font-weight="bold" transform="rotate(0.03 607.7 484.0)" >LEARN MORE</text>
</svg>
</body></html>
